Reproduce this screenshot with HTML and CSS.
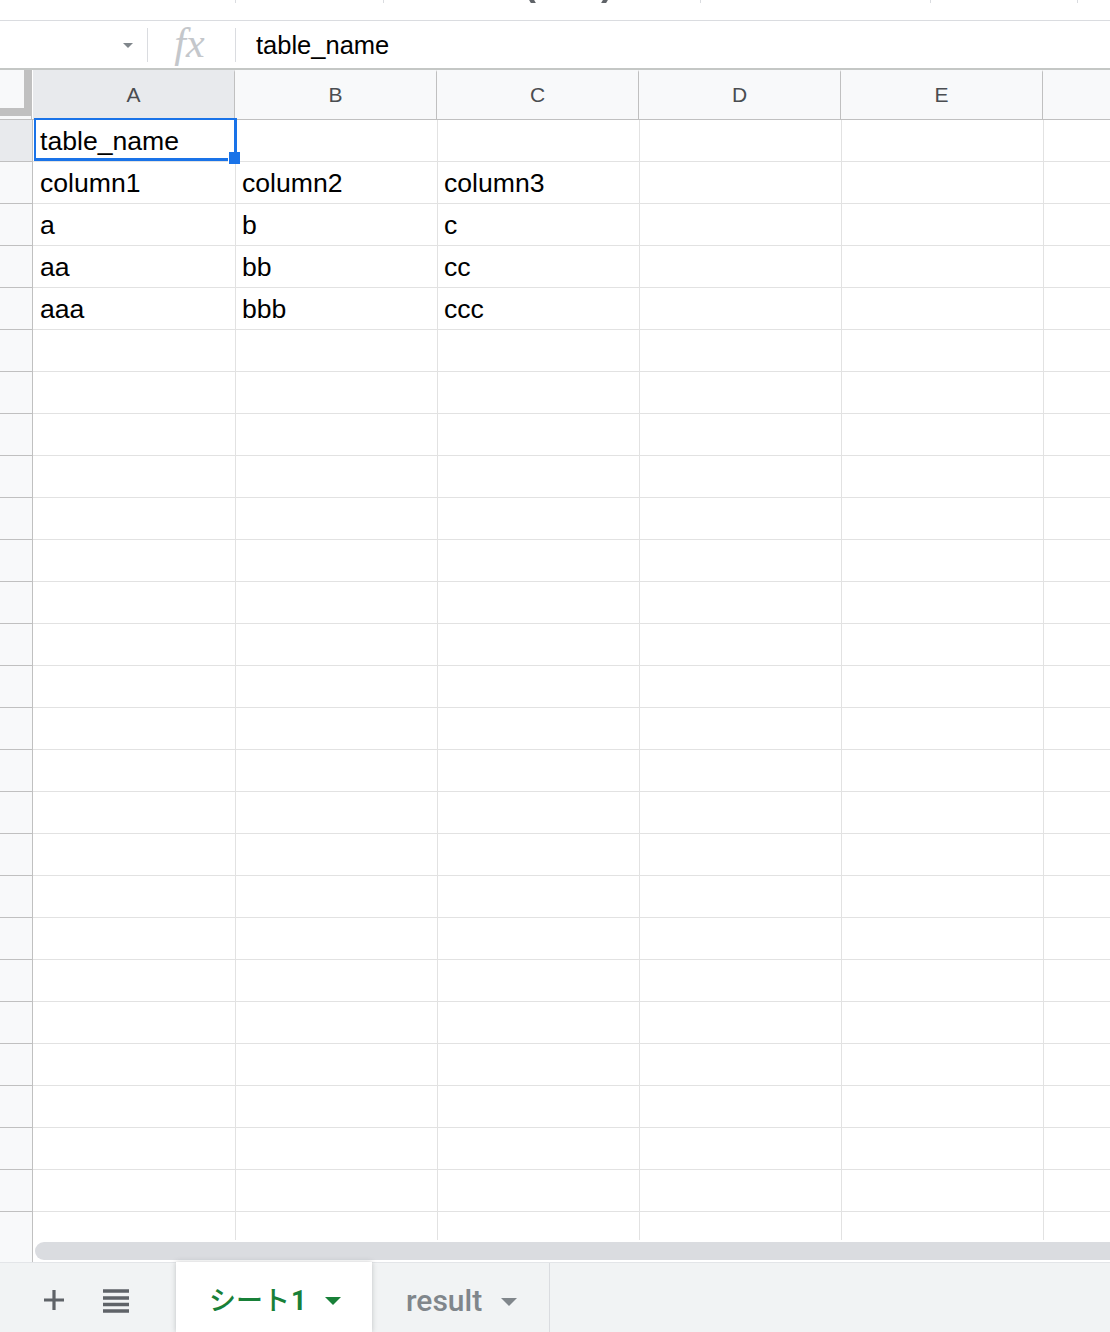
FILE: index.html
```html
<!DOCTYPE html>
<html lang="ja">
<head>
<meta charset="utf-8">
<title>Sheet</title>
<link rel="stylesheet" href="styles.css">
</head>
<body>
<div class="app">
  <div class="toolbar">
    <span class="tsep s1"></span>
    <span class="tsep s2"></span>
    <span class="tmark m1"></span>
    <span class="tmark m2"></span>
    <span class="tsep s3"></span>
    <span class="tsep s4"></span>
    <span class="tsep s5"></span>
  </div>
  <div class="fbar">
    <div class="namebox"><span class="nb-arrow"></span></div>
    <div class="fsep"></div>
    <div class="fx">fx</div>
    <div class="fsep"></div>
    <div class="ftext">table_name</div>
  </div>
  <div class="sheet">
    <div class="hrow">
      <div class="corner"><div class="corner-in"></div></div>
      <div class="ch sel colA">A</div>
      <div class="ch">B</div>
      <div class="ch">C</div>
      <div class="ch">D</div>
      <div class="ch">E</div>
      <div class="ch last"></div>
    </div>
    <div class="body">
      <div class="row"><div class="rh sel"></div><div class="c colA">table_name</div><div class="c"></div><div class="c"></div><div class="c"></div><div class="c"></div><div class="c last"></div></div>
      <div class="row"><div class="rh"></div><div class="c colA">column1</div><div class="c">column2</div><div class="c">column3</div><div class="c"></div><div class="c"></div><div class="c last"></div></div>
      <div class="row"><div class="rh"></div><div class="c colA">a</div><div class="c">b</div><div class="c">c</div><div class="c"></div><div class="c"></div><div class="c last"></div></div>
      <div class="row"><div class="rh"></div><div class="c colA">aa</div><div class="c">bb</div><div class="c">cc</div><div class="c"></div><div class="c"></div><div class="c last"></div></div>
      <div class="row"><div class="rh"></div><div class="c colA">aaa</div><div class="c">bbb</div><div class="c">ccc</div><div class="c"></div><div class="c"></div><div class="c last"></div></div>
      <div class="row"><div class="rh"></div><div class="c colA"></div><div class="c"></div><div class="c"></div><div class="c"></div><div class="c"></div><div class="c last"></div></div>
      <div class="row"><div class="rh"></div><div class="c colA"></div><div class="c"></div><div class="c"></div><div class="c"></div><div class="c"></div><div class="c last"></div></div>
      <div class="row"><div class="rh"></div><div class="c colA"></div><div class="c"></div><div class="c"></div><div class="c"></div><div class="c"></div><div class="c last"></div></div>
      <div class="row"><div class="rh"></div><div class="c colA"></div><div class="c"></div><div class="c"></div><div class="c"></div><div class="c"></div><div class="c last"></div></div>
      <div class="row"><div class="rh"></div><div class="c colA"></div><div class="c"></div><div class="c"></div><div class="c"></div><div class="c"></div><div class="c last"></div></div>
      <div class="row"><div class="rh"></div><div class="c colA"></div><div class="c"></div><div class="c"></div><div class="c"></div><div class="c"></div><div class="c last"></div></div>
      <div class="row"><div class="rh"></div><div class="c colA"></div><div class="c"></div><div class="c"></div><div class="c"></div><div class="c"></div><div class="c last"></div></div>
      <div class="row"><div class="rh"></div><div class="c colA"></div><div class="c"></div><div class="c"></div><div class="c"></div><div class="c"></div><div class="c last"></div></div>
      <div class="row"><div class="rh"></div><div class="c colA"></div><div class="c"></div><div class="c"></div><div class="c"></div><div class="c"></div><div class="c last"></div></div>
      <div class="row"><div class="rh"></div><div class="c colA"></div><div class="c"></div><div class="c"></div><div class="c"></div><div class="c"></div><div class="c last"></div></div>
      <div class="row"><div class="rh"></div><div class="c colA"></div><div class="c"></div><div class="c"></div><div class="c"></div><div class="c"></div><div class="c last"></div></div>
      <div class="row"><div class="rh"></div><div class="c colA"></div><div class="c"></div><div class="c"></div><div class="c"></div><div class="c"></div><div class="c last"></div></div>
      <div class="row"><div class="rh"></div><div class="c colA"></div><div class="c"></div><div class="c"></div><div class="c"></div><div class="c"></div><div class="c last"></div></div>
      <div class="row"><div class="rh"></div><div class="c colA"></div><div class="c"></div><div class="c"></div><div class="c"></div><div class="c"></div><div class="c last"></div></div>
      <div class="row"><div class="rh"></div><div class="c colA"></div><div class="c"></div><div class="c"></div><div class="c"></div><div class="c"></div><div class="c last"></div></div>
      <div class="row"><div class="rh"></div><div class="c colA"></div><div class="c"></div><div class="c"></div><div class="c"></div><div class="c"></div><div class="c last"></div></div>
      <div class="row"><div class="rh"></div><div class="c colA"></div><div class="c"></div><div class="c"></div><div class="c"></div><div class="c"></div><div class="c last"></div></div>
      <div class="row"><div class="rh"></div><div class="c colA"></div><div class="c"></div><div class="c"></div><div class="c"></div><div class="c"></div><div class="c last"></div></div>
      <div class="row"><div class="rh"></div><div class="c colA"></div><div class="c"></div><div class="c"></div><div class="c"></div><div class="c"></div><div class="c last"></div></div>
      <div class="row"><div class="rh"></div><div class="c colA"></div><div class="c"></div><div class="c"></div><div class="c"></div><div class="c"></div><div class="c last"></div></div>
      <div class="row"><div class="rh"></div><div class="c colA"></div><div class="c"></div><div class="c"></div><div class="c"></div><div class="c"></div><div class="c last"></div></div>
      <div class="row"><div class="rh"></div><div class="c colA"></div><div class="c"></div><div class="c"></div><div class="c"></div><div class="c"></div><div class="c last"></div></div>
    </div>
    <div class="selection"><span class="handle"></span></div>
    <div class="scrollrow">
      <div class="rh-tail"></div>
      <div class="track"><div class="thumb"></div></div>
    </div>
  </div>
  <div class="tabbar">
    <div class="tab-tools">
      <svg class="ico-plus" width="22" height="22" viewBox="0 0 22 22"><path d="M11 1v20M1 11h20" stroke="#5f6368" stroke-width="3.2" fill="none"/></svg>
      <svg class="ico-list" width="26" height="24" viewBox="0 0 26 24"><path d="M0 2h26M0 9h26M0 15.5h26M0 22h26" stroke="#5f6368" stroke-width="3.4" fill="none"/></svg>
    </div>
    <div class="tab active"><span class="tab-label">シート<b>1</b></span><span class="tab-arrow green"></span></div>
    <div class="tab inactive"><span class="tab-label">result</span><span class="tab-arrow grey"></span></div>
  </div>
</div>
</body>
</html>
```

FILE: styles.css
```css
* { box-sizing: border-box; }
html, body { margin: 0; padding: 0; }
body {
  width: 1110px;
  height: 1332px;
  overflow: hidden;
  background: #fff;
  font-family: "Liberation Sans", Arial, "Noto Sans CJK JP", sans-serif;
}
.app { width: 1110px; height: 1332px; overflow: hidden; display: flex; flex-direction: column; }

/* toolbar remnant */
.toolbar {
  height: 21px;
  flex: none;
  border-bottom: 1px solid #dadce0;
  display: flex;
  align-items: flex-start;
}
.tsep { display: block; width: 1px; height: 3px; background: #dadce0; }
.tmark { display: block; width: 5px; height: 3px; background: #5f6368; }
.s1 { margin-left: 235px; }
.s2 { margin-left: 147px; }
.m1 { margin-left: 146px; transform: skewX(30deg); }
.m2 { margin-left: 67px; transform: skewX(-30deg); }
.s3 { margin-left: 93px; }
.s4 { margin-left: 229px; }
.s5 { margin-left: 146px; }

/* formula bar */
.fbar {
  height: 49px;
  flex: none;
  border-bottom: 2px solid #c4c7c5;
  display: flex;
  align-items: center;
}
.namebox {
  width: 147px;
  height: 100%;
  display: flex;
  align-items: center;
  justify-content: flex-end;
  padding-right: 14px;
  padding-top: 2px;
}
.nb-arrow {
  width: 0; height: 0;
  border-left: 5px solid transparent;
  border-right: 5px solid transparent;
  border-top: 5px solid #80868b;
}
.fsep { width: 1px; height: 34px; background: #dadce0; }
.fx {
  width: 87px;
  text-align: center;
  font-family: "Liberation Serif", serif;
  font-style: italic;
  font-size: 42px;
  color: #c4c7cb;
  line-height: 44px;
  padding-right: 4px;
  padding-bottom: 4px;
}
.ftext {
  padding-left: 20px;
  font-size: 25.5px;
  color: #000;
  padding-top: 1px;
}

/* sheet grid */
.sheet { position: relative; flex: none; display: flex; flex-direction: column; }
.hrow {
  height: 50px;
  display: flex;
  border-bottom: 1px solid #c0c0c0;
}
.corner {
  width: 33px;
  flex: none;
  background: #c0c0c0;
  border-right: 1px solid #fff;
  padding: 0 8px 3px 0;
  position: relative;
}
.corner-in { width: 24px; height: 38px; background: #f8f9fa; }
.corner::after {
  content: "";
  position: absolute;
  left: 0; right: 1px; bottom: 0;
  height: 3px;
  background: #f8f9fa;
}
.ch {
  width: 202px;
  flex: none;
  background: #f8f9fa;
  border-right: 1px solid #c0c0c0;
  border-top: 2px solid #f8f9fa;
  display: flex;
  align-items: center;
  justify-content: center;
  font-size: 21px;
  color: #4a4d51;
  padding-bottom: 1px;
}
.ch.sel { background: #e8eaed; border-top-color: #e8eaed; }
.ch.colA { width: 202px; }
.ch.last { flex: 1; border-right: none; }

.body { height: 1120px; overflow: hidden; }
.row {
  height: 42px;
  display: flex;
  border-bottom: 1px solid #e2e2e2;
}
.rh {
  width: 33px;
  flex: none;
  background: #f8f9fa;
  border-right: 1px solid #c0c0c0;
  border-bottom: 1px solid #c0c0c0;
  margin-bottom: -1px;
}
.rh.sel { background: #e8eaed; }
.c {
  width: 202px;
  flex: none;
  border-right: 1px solid #e2e2e2;
  display: flex;
  align-items: flex-end;
  padding: 0 6px 5px 6px;
  font-size: 26.6px;
  line-height: 30px;
  color: #000;
  white-space: nowrap;
  overflow: hidden;
}
.c.colA { width: 203px; padding-left: 7px; }
.c.last { flex: 1; border-right: none; }

.selection {
  position: absolute;
  left: 34px;
  top: 48px;
  width: 203px;
  height: 43px;
  border: 2px solid #1a73e8;
  border-right-width: 3px;
  border-bottom-width: 3px;
  pointer-events: none;
}
.handle {
  position: absolute;
  right: -6px;
  bottom: -6px;
  width: 12px;
  height: 12px;
  background: #1a73e8;
  border: 1px solid #fff;
  border-width: 0 0 0 1px;
}

.scrollrow { height: 22px; display: flex; }
.rh-tail {
  width: 33px;
  flex: none;
  background: #f8f9fa;
  border-right: 1px solid #c0c0c0;
}
.track { flex: 1; padding: 2px 0 2px 2px; background: #fff; }
.thumb {
  height: 18px;
  background: #dadce0;
  border-radius: 9px 0 0 9px;
}

/* tabs */
.tabbar {
  flex: 1;
  background: #f1f3f4;
  border-top: 1px solid #e3e5e8;
  display: flex;
  align-items: stretch;
}
.tab-tools {
  width: 176px;
  flex: none;
  display: flex;
  align-items: center;
  padding-left: 43px;
  gap: 38px;
  padding-top: 5px;
}
.ico-list { margin-top: 1px; }
.tab {
  display: flex;
  align-items: center;
  padding-top: 6px;
}
.tab.active {
  width: 196px;
  background: #fff;
  padding-left: 33px;
  box-shadow: 0 0 5px rgba(60, 64, 67, 0.28);
  position: relative;
  margin-top: -1px;
}
.tab.inactive {
  width: 178px;
  padding-left: 34px;
  border-right: 1px solid #dadce0;
}
.tab-label {
  font-family: "Noto Sans CJK JP", "Noto Sans", sans-serif;
  font-size: 27px;
  font-weight: 500;
  line-height: 32px;
}
.tab-label b { font-family: Roboto, "Noto Sans", sans-serif; font-weight: 700; margin-left: 1px; }
.active .tab-label { color: #188038; }
.inactive .tab-label { font-family: Roboto, "Noto Sans", sans-serif; color: #80868b; font-size: 30px; }
.tab-arrow {
  width: 0; height: 0;
  border-left: 8px solid transparent;
  border-right: 8px solid transparent;
  border-top: 8px solid #188038;
  margin-left: 18px;
  margin-top: 2px;
}
.tab-arrow.grey { border-top-color: #80868b; margin-left: 19px; }
```
